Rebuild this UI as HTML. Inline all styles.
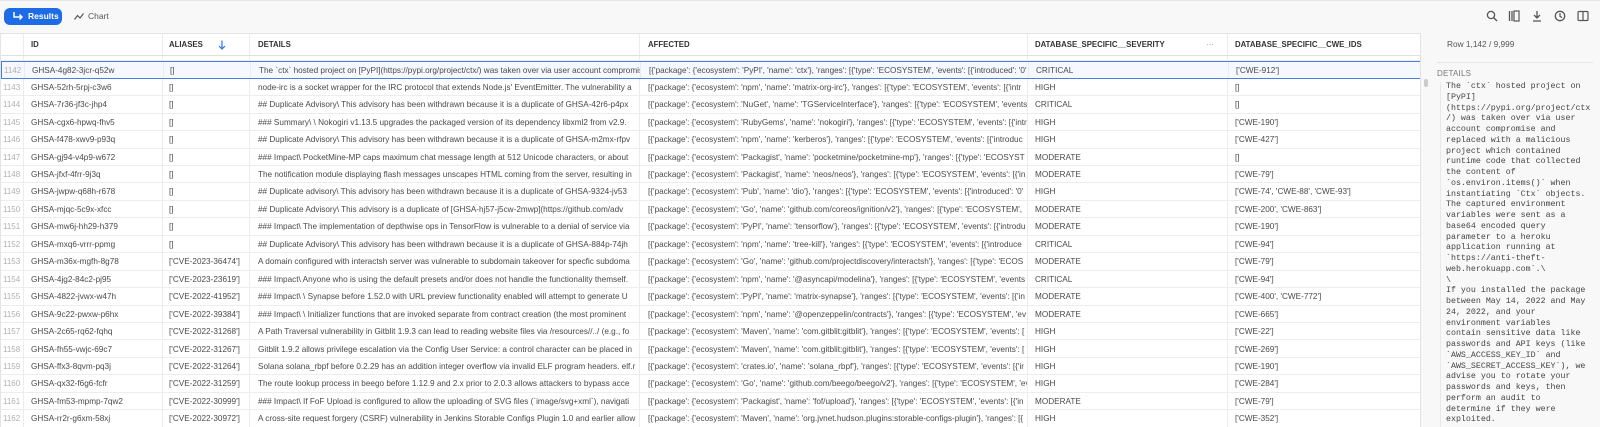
<!DOCTYPE html>
<html><head><meta charset="utf-8"><style>
*{margin:0;padding:0;box-sizing:border-box}
body{width:1600px;height:427px;overflow:hidden;background:#f8f8f8;font-family:"Liberation Sans",sans-serif;color:#444;position:relative}
.top{position:absolute;left:0;top:0;width:1600px;height:33px;background:#f8f8f8;border-top:1px solid #e6e6e6}
.btn{position:absolute;left:4px;top:7px;width:58px;height:17px;background:#1d6ce6;border-radius:6px;color:#fff;font-size:8.5px;font-weight:bold;line-height:17px;padding-left:24px}
.btn svg{position:absolute;left:9px;top:4px}
.chart{position:absolute;left:74px;top:7px;font-size:8.5px;line-height:17px;color:#555;padding-left:14px}
.chart svg{position:absolute;left:0;top:5px}
.icons svg{position:absolute;top:9px}
.tbl{position:absolute;left:0;top:33px;width:1421px;height:394px;background:#fff;border:1px solid #e4e4e4;border-bottom:none;overflow:hidden}
.hd{position:absolute;left:0;top:0;width:1420px;height:22px;border-bottom:1px solid #e0e0e0;font-weight:bold;font-size:7.8px;color:#333;line-height:22px}
.row{position:absolute;left:0;width:1420px;height:17.45px;border-bottom:1px solid #ededed;font-size:8.2px;line-height:17px;color:#4a4a4a}
.c{position:absolute;top:0;height:100%;white-space:nowrap;overflow:hidden;padding-left:7px;border-right:1px solid #ececec}
.n{left:0;width:23px;color:#b0b0b0;padding-left:2px;font-size:8px}
.i{left:23px;width:139px}.a{left:162px;width:87px;padding-left:6px}.d{left:249px;width:390px;padding-left:8px}.f{left:639px;width:388px;padding-left:8px}.s{left:1027px;width:200px}.w{left:1227px;width:193px;border-right:none}
.sel{border:1px solid #4a7fe0;background:#f5f8fe}
.rp{position:absolute;left:1421px;top:33px;width:179px;height:394px;background:#f8f8f8}
pre{position:absolute;left:1446px;top:82px;font-family:"Liberation Mono",monospace;font-size:8.3px;line-height:10.75px;color:#444}
</style></head><body>
<div class="top">
<div class="btn"><svg width="11" height="9" viewBox="0 0 11 9"><path d="M1 0v5h8M6.5 2.5L9 5 6.5 7.5" stroke="#fff" stroke-width="1.5" fill="none"/></svg>Results</div>
<div class="chart"><svg width="10" height="7" viewBox="0 0 10 7"><path d="M0.5 6.5L3.5 2.5 6 5 9.5 0.5" stroke="#555" stroke-width="1.2" fill="none"/></svg>Chart</div>
<div class="icons">
<svg style="left:1486px" width="12" height="12" viewBox="0 0 12 12"><circle cx="5" cy="5" r="3.6" stroke="#555" stroke-width="1.3" fill="none"/><path d="M7.7 7.7L11 11" stroke="#555" stroke-width="1.4"/></svg>
<svg style="left:1508px" width="12" height="12" viewBox="0 0 12 12"><path d="M1.5 1v10M4 1v10" stroke="#555" stroke-width="1.3"/><rect x="6" y="1" width="5" height="10" stroke="#555" stroke-width="1.2" fill="none"/></svg>
<svg style="left:1531px" width="12" height="12" viewBox="0 0 12 12"><path d="M6 1v6.5M3 5l3 3 3-3M2 11h8" stroke="#555" stroke-width="1.3" fill="none"/></svg>
<svg style="left:1554px" width="12" height="12" viewBox="0 0 12 12"><circle cx="6" cy="6" r="4.7" stroke="#555" stroke-width="1.3" fill="none"/><path d="M6 3v3.3l2 1.3" stroke="#555" stroke-width="1.2" fill="none"/></svg>
<svg style="left:1577px" width="12" height="12" viewBox="0 0 12 12"><rect x="1" y="1.5" width="10" height="9" rx="1" stroke="#555" stroke-width="1.2" fill="none"/><path d="M6 1.5v9" stroke="#555" stroke-width="1.2"/></svg>
</div>
</div>
<div class="tbl">
<div class="hd">
<div class="c n"></div><div class="c i">ID</div><div class="c a">ALIASES<svg style="position:absolute;left:55px;top:6px" width="8" height="10" viewBox="0 0 8 10"><path d="M4 0.5v8.5M1 6l3 3 3-3" stroke="#2f73e0" stroke-width="1.2" fill="none"/></svg></div><div class="c d">DETAILS</div><div class="c f">AFFECTED</div><div class="c s">DATABASE_SPECIFIC__SEVERITY<span style="position:absolute;left:178px;color:#888;font-weight:normal">···</span></div><div class="c w">DATABASE_SPECIFIC__CWE_IDS</div>
</div>
<div class="row" style="top:22px;height:5px"><div class="c n"></div><div class="c i"></div><div class="c a"></div><div class="c d"></div><div class="c f"></div><div class="c s"></div><div class="c w"></div></div>

<div class="row sel" style="top:27.3px"><div class="c n">1142</div><div class="c i">GHSA-4g82-3jcr-q52w</div><div class="c a">[]</div><div class="c d">The `ctx` hosted project on [PyPI](https://pypi.org/project/ctx/) was taken over via user account compromise and replaced</div><div class="c f">[{'package': {'ecosystem': 'PyPI', 'name': 'ctx'}, 'ranges': [{'type': 'ECOSYSTEM', 'events': [{'introduced': '0'</div><div class="c s">CRITICAL</div><div class="c w">['CWE-912']</div></div>
<div class="row" style="top:44.75px"><div class="c n">1143</div><div class="c i">GHSA-52rh-5rpj-c3w6</div><div class="c a">[]</div><div class="c d">node-irc is a socket wrapper for the IRC protocol that extends Node.js' EventEmitter. The vulnerability a</div><div class="c f">[{'package': {'ecosystem': 'npm', 'name': 'matrix-org-irc'}, 'ranges': [{'type': 'ECOSYSTEM', 'events': [{'intr</div><div class="c s">HIGH</div><div class="c w">[]</div></div>
<div class="row" style="top:62.2px"><div class="c n">1144</div><div class="c i">GHSA-7r36-jf3c-jhp4</div><div class="c a">[]</div><div class="c d">## Duplicate Advisory\ This advisory has been withdrawn because it is a duplicate of GHSA-42r6-p4px</div><div class="c f">[{'package': {'ecosystem': 'NuGet', 'name': 'TGServiceInterface'}, 'ranges': [{'type': 'ECOSYSTEM', 'events</div><div class="c s">CRITICAL</div><div class="c w">[]</div></div>
<div class="row" style="top:79.65px"><div class="c n">1145</div><div class="c i">GHSA-cgx6-hpwq-fhv5</div><div class="c a">[]</div><div class="c d">### Summary\ \ Nokogiri v1.13.5 upgrades the packaged version of its dependency libxml2 from v2.9.</div><div class="c f">[{'package': {'ecosystem': 'RubyGems', 'name': 'nokogiri'}, 'ranges': [{'type': 'ECOSYSTEM', 'events': [{'intr</div><div class="c s">HIGH</div><div class="c w">['CWE-190']</div></div>
<div class="row" style="top:97.1px"><div class="c n">1146</div><div class="c i">GHSA-f478-xwv9-p93q</div><div class="c a">[]</div><div class="c d">## Duplicate Advisory\ This advisory has been withdrawn because it is a duplicate of GHSA-m2mx-rfpv</div><div class="c f">[{'package': {'ecosystem': 'npm', 'name': 'kerberos'}, 'ranges': [{'type': 'ECOSYSTEM', 'events': [{'introduc</div><div class="c s">HIGH</div><div class="c w">['CWE-427']</div></div>
<div class="row" style="top:114.55px"><div class="c n">1147</div><div class="c i">GHSA-gj94-v4p9-w672</div><div class="c a">[]</div><div class="c d">### Impact\ PocketMine-MP caps maximum chat message length at 512 Unicode characters, or about</div><div class="c f">[{'package': {'ecosystem': 'Packagist', 'name': 'pocketmine/pocketmine-mp'}, 'ranges': [{'type': 'ECOSYST</div><div class="c s">MODERATE</div><div class="c w">[]</div></div>
<div class="row" style="top:132px"><div class="c n">1148</div><div class="c i">GHSA-jfxf-4frr-9j3q</div><div class="c a">[]</div><div class="c d">The notification module displaying flash messages unscapes HTML coming from the server, resulting in</div><div class="c f">[{'package': {'ecosystem': 'Packagist', 'name': 'neos/neos'}, 'ranges': [{'type': 'ECOSYSTEM', 'events': [{'in</div><div class="c s">MODERATE</div><div class="c w">['CWE-79']</div></div>
<div class="row" style="top:149.45px"><div class="c n">1149</div><div class="c i">GHSA-jwpw-q68h-r678</div><div class="c a">[]</div><div class="c d">## Duplicate advisory\ This advisory has been withdrawn because it is a duplicate of GHSA-9324-jv53</div><div class="c f">[{'package': {'ecosystem': 'Pub', 'name': 'dio'}, 'ranges': [{'type': 'ECOSYSTEM', 'events': [{'introduced': '0'</div><div class="c s">HIGH</div><div class="c w">['CWE-74', 'CWE-88', 'CWE-93']</div></div>
<div class="row" style="top:166.9px"><div class="c n">1150</div><div class="c i">GHSA-mjqc-5c9x-xfcc</div><div class="c a">[]</div><div class="c d">## Duplicate Advisory\ This advisory is a duplicate of [GHSA-hj57-j5cw-2mwp](https://github.com/adv</div><div class="c f">[{'package': {'ecosystem': 'Go', 'name': 'github.com/coreos/ignition/v2'}, 'ranges': [{'type': 'ECOSYSTEM',</div><div class="c s">MODERATE</div><div class="c w">['CWE-200', 'CWE-863']</div></div>
<div class="row" style="top:184.35px"><div class="c n">1151</div><div class="c i">GHSA-mw6j-hh29-h379</div><div class="c a">[]</div><div class="c d">### Impact\ The implementation of depthwise ops in TensorFlow is vulnerable to a denial of service via</div><div class="c f">[{'package': {'ecosystem': 'PyPI', 'name': 'tensorflow'}, 'ranges': [{'type': 'ECOSYSTEM', 'events': [{'introdu</div><div class="c s">MODERATE</div><div class="c w">['CWE-190']</div></div>
<div class="row" style="top:201.8px"><div class="c n">1152</div><div class="c i">GHSA-mxq6-vrrr-ppmg</div><div class="c a">[]</div><div class="c d">## Duplicate Advisory\ This advisory has been withdrawn because it is a duplicate of GHSA-884p-74jh</div><div class="c f">[{'package': {'ecosystem': 'npm', 'name': 'tree-kill'}, 'ranges': [{'type': 'ECOSYSTEM', 'events': [{'introduce</div><div class="c s">CRITICAL</div><div class="c w">['CWE-94']</div></div>
<div class="row" style="top:219.25px"><div class="c n">1153</div><div class="c i">GHSA-m36x-mgfh-8g78</div><div class="c a">['CVE-2023-36474']</div><div class="c d">A domain configured with interactsh server was vulnerable to subdomain takeover for specfic subdoma</div><div class="c f">[{'package': {'ecosystem': 'Go', 'name': 'github.com/projectdiscovery/interactsh'}, 'ranges': [{'type': 'ECOS</div><div class="c s">MODERATE</div><div class="c w">['CWE-79']</div></div>
<div class="row" style="top:236.7px"><div class="c n">1154</div><div class="c i">GHSA-4jg2-84c2-pj95</div><div class="c a">['CVE-2023-23619']</div><div class="c d">### Impact\ Anyone who is using the default presets and/or does not handle the functionality themself.</div><div class="c f">[{'package': {'ecosystem': 'npm', 'name': '@asyncapi/modelina'}, 'ranges': [{'type': 'ECOSYSTEM', 'events</div><div class="c s">CRITICAL</div><div class="c w">['CWE-94']</div></div>
<div class="row" style="top:254.15px"><div class="c n">1155</div><div class="c i">GHSA-4822-jvwx-w47h</div><div class="c a">['CVE-2022-41952']</div><div class="c d">### Impact\ \ Synapse before 1.52.0 with URL preview functionality enabled will attempt to generate U</div><div class="c f">[{'package': {'ecosystem': 'PyPI', 'name': 'matrix-synapse'}, 'ranges': [{'type': 'ECOSYSTEM', 'events': [{'in</div><div class="c s">MODERATE</div><div class="c w">['CWE-400', 'CWE-772']</div></div>
<div class="row" style="top:271.6px"><div class="c n">1156</div><div class="c i">GHSA-9c22-pwxw-p6hx</div><div class="c a">['CVE-2022-39384']</div><div class="c d">### Impact\ \ Initializer functions that are invoked separate from contract creation (the most prominent</div><div class="c f">[{'package': {'ecosystem': 'npm', 'name': '@openzeppelin/contracts'}, 'ranges': [{'type': 'ECOSYSTEM', 'ev</div><div class="c s">MODERATE</div><div class="c w">['CWE-665']</div></div>
<div class="row" style="top:289.05px"><div class="c n">1157</div><div class="c i">GHSA-2c65-rq62-fqhq</div><div class="c a">['CVE-2022-31268']</div><div class="c d">A Path Traversal vulnerability in Gitblit 1.9.3 can lead to reading website files via /resources//../ (e.g., fo</div><div class="c f">[{'package': {'ecosystem': 'Maven', 'name': 'com.gitblit:gitblit'}, 'ranges': [{'type': 'ECOSYSTEM', 'events': [</div><div class="c s">HIGH</div><div class="c w">['CWE-22']</div></div>
<div class="row" style="top:306.5px"><div class="c n">1158</div><div class="c i">GHSA-fh55-vwjc-69c7</div><div class="c a">['CVE-2022-31267']</div><div class="c d">Gitblit 1.9.2 allows privilege escalation via the Config User Service: a control character can be placed in</div><div class="c f">[{'package': {'ecosystem': 'Maven', 'name': 'com.gitblit:gitblit'}, 'ranges': [{'type': 'ECOSYSTEM', 'events': [</div><div class="c s">HIGH</div><div class="c w">['CWE-269']</div></div>
<div class="row" style="top:323.95px"><div class="c n">1159</div><div class="c i">GHSA-ffx3-8qvm-pq3j</div><div class="c a">['CVE-2022-31264']</div><div class="c d">Solana solana_rbpf before 0.2.29 has an addition integer overflow via invalid ELF program headers. elf.r</div><div class="c f">[{'package': {'ecosystem': 'crates.io', 'name': 'solana_rbpf'}, 'ranges': [{'type': 'ECOSYSTEM', 'events': [{'ir</div><div class="c s">HIGH</div><div class="c w">['CWE-190']</div></div>
<div class="row" style="top:341.4px"><div class="c n">1160</div><div class="c i">GHSA-qx32-f6g6-fcfr</div><div class="c a">['CVE-2022-31259']</div><div class="c d">The route lookup process in beego before 1.12.9 and 2.x prior to 2.0.3 allows attackers to bypass acce</div><div class="c f">[{'package': {'ecosystem': 'Go', 'name': 'github.com/beego/beego/v2'}, 'ranges': [{'type': 'ECOSYSTEM', 'ev</div><div class="c s">HIGH</div><div class="c w">['CWE-284']</div></div>
<div class="row" style="top:358.85px"><div class="c n">1161</div><div class="c i">GHSA-fm53-mpmp-7qw2</div><div class="c a">['CVE-2022-30999']</div><div class="c d">### Impact\ If FoF Upload is configured to allow the uploading of SVG files (`image/svg+xml`), navigati</div><div class="c f">[{'package': {'ecosystem': 'Packagist', 'name': 'fof/upload'}, 'ranges': [{'type': 'ECOSYSTEM', 'events': [{'in</div><div class="c s">MODERATE</div><div class="c w">['CWE-79']</div></div>
<div class="row" style="top:376.3px"><div class="c n">1162</div><div class="c i">GHSA-rr2r-g6xm-58xj</div><div class="c a">['CVE-2022-30972']</div><div class="c d">A cross-site request forgery (CSRF) vulnerability in Jenkins Storable Configs Plugin 1.0 and earlier allow</div><div class="c f">[{'package': {'ecosystem': 'Maven', 'name': 'org.jvnet.hudson.plugins:storable-configs-plugin'}, 'ranges': [{</div><div class="c s">HIGH</div><div class="c w">['CWE-352']</div></div>
</div>
<div class="rp"></div>
<div style="position:absolute;left:1424px;top:79px;width:4px;height:8px;background:#ccc;border-radius:2px"></div>
<div style="position:absolute;left:1447px;top:39px;font-size:8.3px;color:#555">Row 1,142 / 9,999</div>
<div style="position:absolute;left:1437px;top:62px;width:156px;height:1px;background:#e6e6e6"></div>
<div style="position:absolute;left:1437px;top:69px;font-size:8px;color:#777;letter-spacing:0.2px">DETAILS</div>
<div style="position:absolute;left:1440px;top:82px;width:1px;height:345px;background:#e8e8e8"></div>
<pre>The `ctx` hosted project on
[PyPI]
(https://pypi.org/project/ctx
/) was taken over via user
account compromise and
replaced with a malicious
project which contained
runtime code that collected
the content of
`os.environ.items()` when
instantiating `Ctx` objects.
The captured environment
variables were sent as a
base64 encoded query
parameter to a heroku
application running at
`https://anti-theft-
web.herokuapp.com`.\
\
If you installed the package
between May 14, 2022 and May
24, 2022, and your
environment variables
contain sensitive data like
passwords and API keys (like
`AWS_ACCESS_KEY_ID` and
`AWS_SECRET_ACCESS_KEY`), we
advise you to rotate your
passwords and keys, then
perform an audit to
determine if they were
exploited.</pre>
</body></html>
